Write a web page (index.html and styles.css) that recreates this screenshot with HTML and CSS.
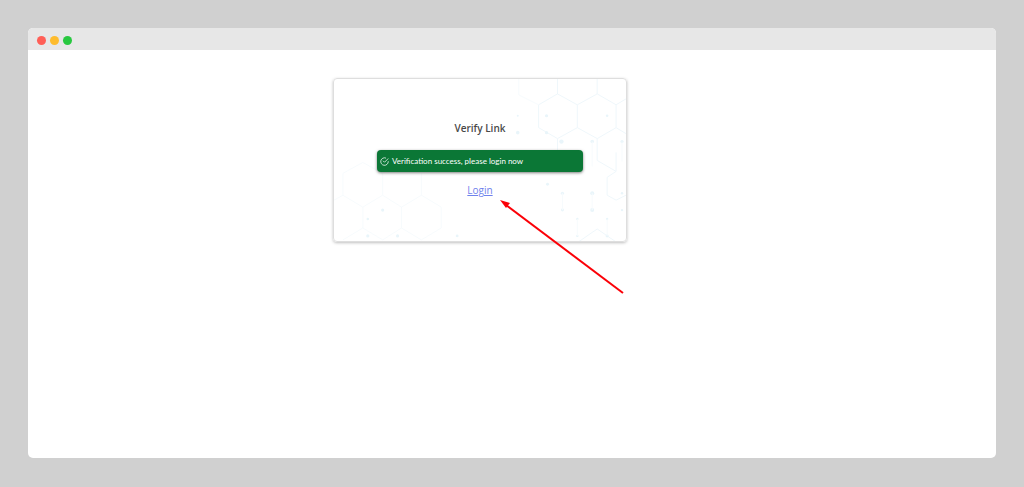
FILE: index.html
```html
<!DOCTYPE html>
<html lang="en">
<head>
  <meta charset="UTF-8">
  <meta name="viewport" content="width=device-width, initial-scale=1.0">
  <title>Verify Link</title>
  <link rel="stylesheet" href="styles.css">
</head>
<body>
  <div class="window">
    <header class="titlebar">
      <span class="dot red"></span>
      <span class="dot yellow"></span>
      <span class="dot green"></span>
    </header>
    <main class="content">
      <section class="card">
        <svg class="pattern" viewBox="0 0 294 164" preserveAspectRatio="xMaxYMin slice" aria-hidden="true">
          <g class="hexagons">
            <path d="M225 0v15l20 11 20-11 19 11 10-6M265 0v15M206 26l19-11M206 26v23l19 11 20-11V26M245 49l20 11 19-11V26M284 49l10 6M265 60v22l19 11V74M284 93l-9 6v18l9 5 10-5M225 60v12M236 171l29-20 29 20"/>
          </g>
          <g class="hexagons faint">
            <path d="M186 0v16l20 10M0 122l9-5 20 12v21l20 12 19-12v-21l20-12 20 12v21l-20 12-20-12M9 117V95l20-11 20 11v22l19 12M49 117l-20 12M88 117V95M29 150L9 162"/>
          </g>
          <g class="nodes">
            <circle cx="214" cy="37" r="1.6"/>
            <circle cx="275" cy="37" r="1.3"/>
            <circle cx="185" cy="54" r="1.8"/>
            <circle cx="214" cy="54" r="1.6"/>
            <circle cx="229" cy="63" r="2.2"/>
            <circle cx="260" cy="63" r="1.8"/>
            <circle cx="290" cy="63" r="1.6"/>
            <circle cx="185" cy="37" r="1"/>
            <circle cx="215" cy="106" r="1.5"/>
            <circle cx="230" cy="115" r="1.6"/>
            <circle cx="260" cy="115" r="2"/>
            <circle cx="290" cy="115" r="1.2"/>
            <circle cx="230" cy="132" r="1.5"/>
            <circle cx="260" cy="132" r="2"/>
            <circle cx="290" cy="132" r="1.2"/>
            <circle cx="245" cy="141" r="1.2"/>
            <circle cx="275" cy="141" r="1.2"/>
            <circle cx="245" cy="158" r="1.2"/>
            <circle cx="275" cy="158" r="1.5"/>
            <circle cx="49" cy="132" r="1.6"/>
            <circle cx="34" cy="141" r="1.3"/>
            <circle cx="34" cy="158" r="1.6"/>
            <circle cx="64" cy="158" r="1.6"/>
            <circle cx="124" cy="158" r="1.4"/>
          </g>
          <path class="hexagons faint" d="M260 63v25M290 63v20M260 115v17M230 115v17M245 141v17M275 141v17"/>
        </svg>

        <h1>Verify Link</h1>
        <div class="alert" role="status">
          <svg class="check" viewBox="0 0 24 24" aria-hidden="true">
            <path d="M22 11v1a10 10 0 1 1-6-9"/>
            <path d="M22 4L12 14l-4-4"/>
          </svg>
          <span>Verification success, please login now</span>
        </div>
        <a class="login" href="/login">Login</a>

        <svg class="arrow" viewBox="0 0 126 96" aria-hidden="true">
          <path class="shaft" d="M6 5l117 88"/>
          <path class="head" d="M0 0l10 3-4 5z"/>
        </svg>
      </section>
    </main>
  </div>
</body>
</html>
```
FILE: styles.css
```css
* {
  box-sizing: border-box;
}
body {
  margin: 0;
  padding: 28px;
  height: 100vh;
  display: flex;
  background-color: #d0d0d0;
  font-family: "Open Sans", "Noto Sans", sans-serif;
}
.window {
  flex: 1;
  margin-bottom: 1px;
  border-radius: 5px;
  background-color: #fff;
  overflow: hidden;
}
.titlebar {
  display: flex;
  align-items: center;
  gap: 4px;
  height: 22px;
  padding: 2px 9px 0;
  background-color: #e7e7e7;
}
.dot {
  width: 9px;
  height: 9px;
  border-radius: 50%;
}
.red {
  background-color: #ff5f57;
}
.yellow {
  background-color: #febc2e;
}
.green {
  background-color: #28c840;
}
.content {
  display: flex;
  justify-content: center;
  padding: 28px 64px 28px 0;
}
.card {
  position: relative;
  display: flex;
  flex-direction: column;
  align-items: center;
  width: 294px;
  padding: 41px 43px 43px;
  border: 1px solid #dedede;
  border-radius: 4px;
  box-shadow: 0 1px 3px rgba(0, 0, 0, 0.25);
}
.pattern {
  position: absolute;
  inset: 0;
  width: 100%;
  height: 100%;
}
.hexagons {
  fill: none;
  stroke: #eff7fb;
  stroke-width: 1;
}
.faint {
  stroke: #f7fbfd;
}
.nodes {
  fill: #e9f5fa;
}
h1 {
  position: relative;
  margin: 0 0 14px;
  font-size: 10px;
  line-height: 16px;
  font-weight: 600;
  color: #484848;
}
.alert {
  position: relative;
  display: flex;
  align-items: center;
  gap: 3px;
  width: 100%;
  height: 22px;
  padding: 0 3px;
  border-radius: 4px;
  background-color: #0b7736;
  box-shadow: 0 1px 3px rgba(0, 0, 0, 0.5);
  color: #fff;
  font-family: Lato, "Open Sans", sans-serif;
  font-size: 8px;
  line-height: 12px;
  white-space: nowrap;
}
.check {
  width: 9px;
  height: 9px;
  fill: none;
  stroke: #fff;
  stroke-width: 2;
}
.login {
  position: relative;
  margin-top: 10px;
  font-size: 10px;
  line-height: 16px;
  color: #6f82ec;
}
/* pointer to the login link, runs past the card edge */
.arrow {
  position: absolute;
  left: 166px;
  top: 121px;
  width: 126px;
  height: 96px;
}
.shaft {
  stroke: #fb0007;
  stroke-width: 2;
}
.head {
  fill: #fb0007;
}
```
